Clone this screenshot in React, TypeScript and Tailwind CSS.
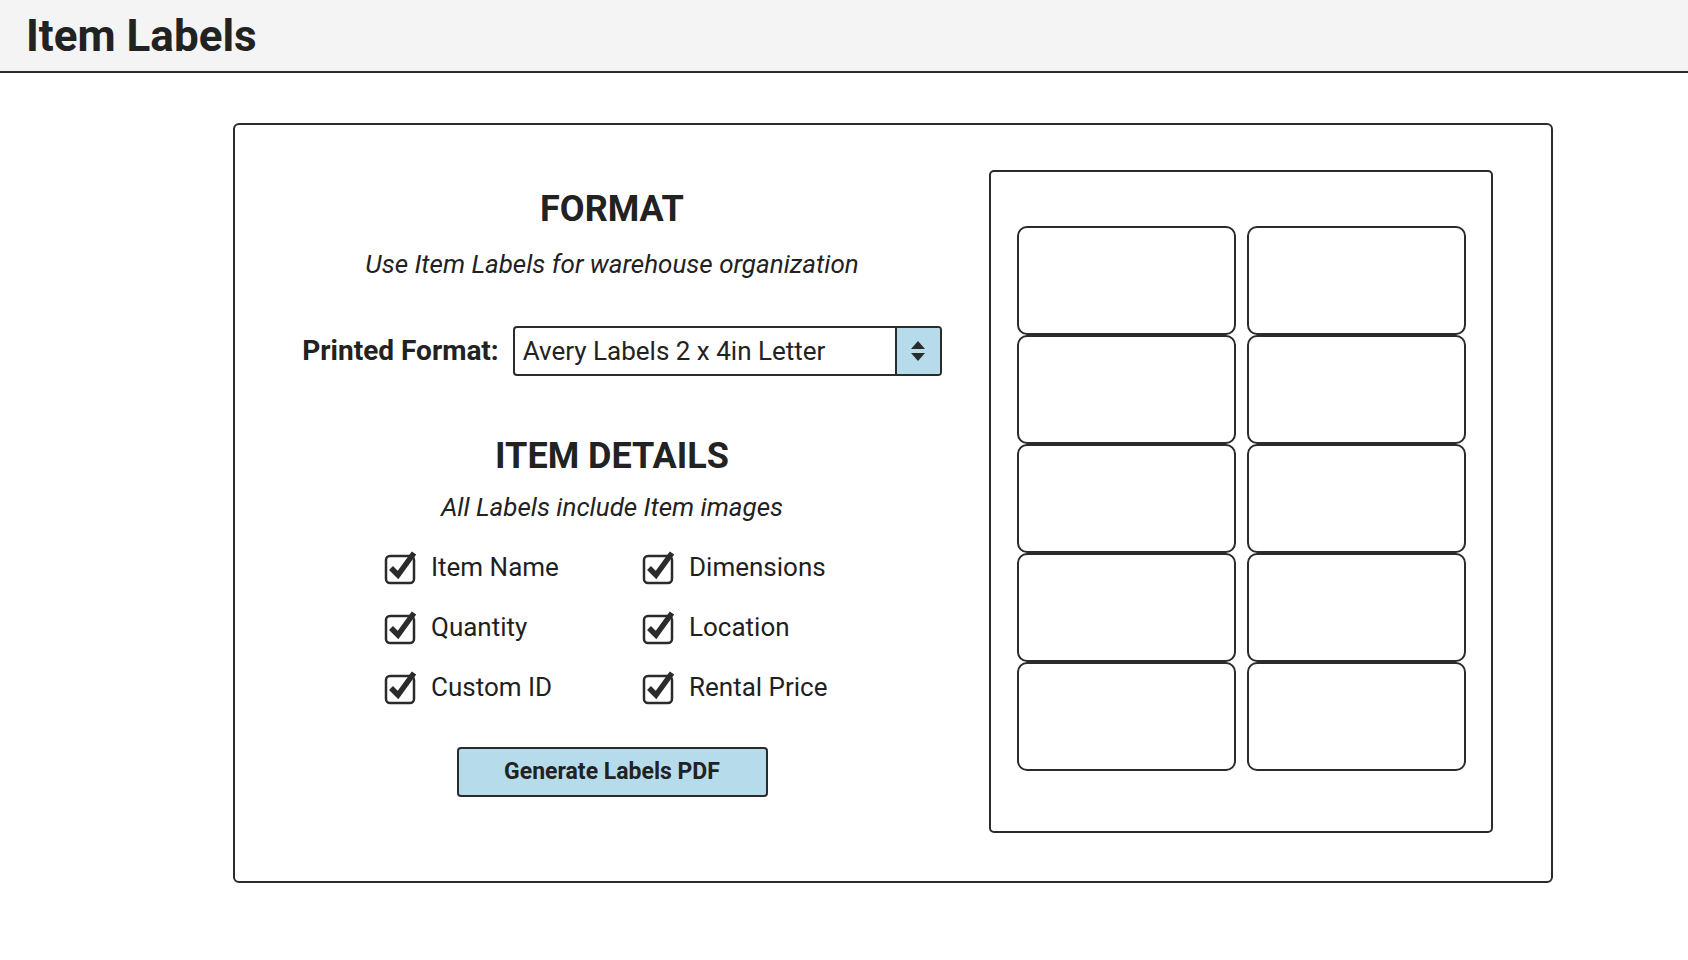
const F = { fontFamily: 'Roboto, "Noto Sans", sans-serif' }

function Check({ label }: { label: string }) {
  return (
    <div className="flex items-center gap-[12px] h-[60px]">
      <svg width="36" height="36" viewBox="0 0 36 36">
        <rect x="3" y="7" width="28" height="27" rx="4" fill="none" stroke="#2b2b2b" strokeWidth="2.5" />
        <path d="M8 19 L15 26 L31 4" fill="none" stroke="#2b2b2b" strokeWidth="5.5" strokeLinejoin="miter" />
      </svg>
      <span className="text-[26px] text-[#1f1f1f]">{label}</span>
    </div>
  )
}

export default function App() {
  return (
    <div className="min-h-screen bg-white text-[#222]" style={F}>
      <div className="h-[73px] bg-[#f4f4f4] border-b-2 border-[#2b2b2b] flex items-center px-[26px]">
        <h1 className="text-[44px] font-bold leading-none">Item Labels</h1>
      </div>
      <div className="mt-[50px] ml-[233px] w-[1320px] h-[760px] border-2 border-[#2b2b2b] rounded-[6px] flex">
        <div className="flex-1 flex flex-col items-center pt-[66px]">
          <h2 className="text-[36px] font-bold leading-none">FORMAT</h2>
          <p className="italic text-[26px] mt-[18px]">Use Item Labels for warehouse organization</p>
          <div className="flex items-center mt-[42px] ml-[20px]">
            <span className="text-[28px] font-bold mr-[14px]">Printed Format:</span>
            <div className="flex w-[429px] h-[50px] border-2 border-[#2b2b2b] rounded-[4px] overflow-hidden">
              <div className="flex-1 flex items-center px-[8px] text-[26px]">Avery Labels 2 x 4in Letter</div>
              <div className="w-[45px] bg-[#b6dcec] border-l-2 border-[#2b2b2b] flex items-center justify-center">
                <svg width="16" height="26" viewBox="0 0 16 26">
                  <path d="M8 3 L15 11 H1 Z M8 23 L15 15 H1 Z" fill="#2b2b2b" />
                </svg>
              </div>
            </div>
          </div>
          <h2 className="text-[36px] font-bold leading-none mt-[62px]">ITEM DETAILS</h2>
          <p className="italic text-[26px] mt-[14px]">All Labels include Item images</p>
          <div className="grid grid-cols-[258px_190px] mt-[10px] mr-[10px]">
            <Check label="Item Name" />
            <Check label="Dimensions" />
            <Check label="Quantity" />
            <Check label="Location" />
            <Check label="Custom ID" />
            <Check label="Rental Price" />
          </div>
          <button className="mt-[30px] w-[311px] h-[50px] bg-[#b6dcec] border-2 border-[#2b2b2b] rounded-[4px] text-[23px] font-bold">
            Generate Labels PDF
          </button>
        </div>
        <div className="w-[504px] h-[663px] mt-[45px] mr-[58px] border-2 border-[#2b2b2b] rounded-[5px] pl-[26px] pt-[54px]">
          <div className="grid grid-cols-[219px_219px] gap-x-[11px]">
            {Array.from({ length: 10 }).map((_, i) => (
              <div key={i} className="h-[109px] border-2 border-[#2b2b2b] rounded-[10px]" />
            ))}
          </div>
        </div>
      </div>
    </div>
  )
}
